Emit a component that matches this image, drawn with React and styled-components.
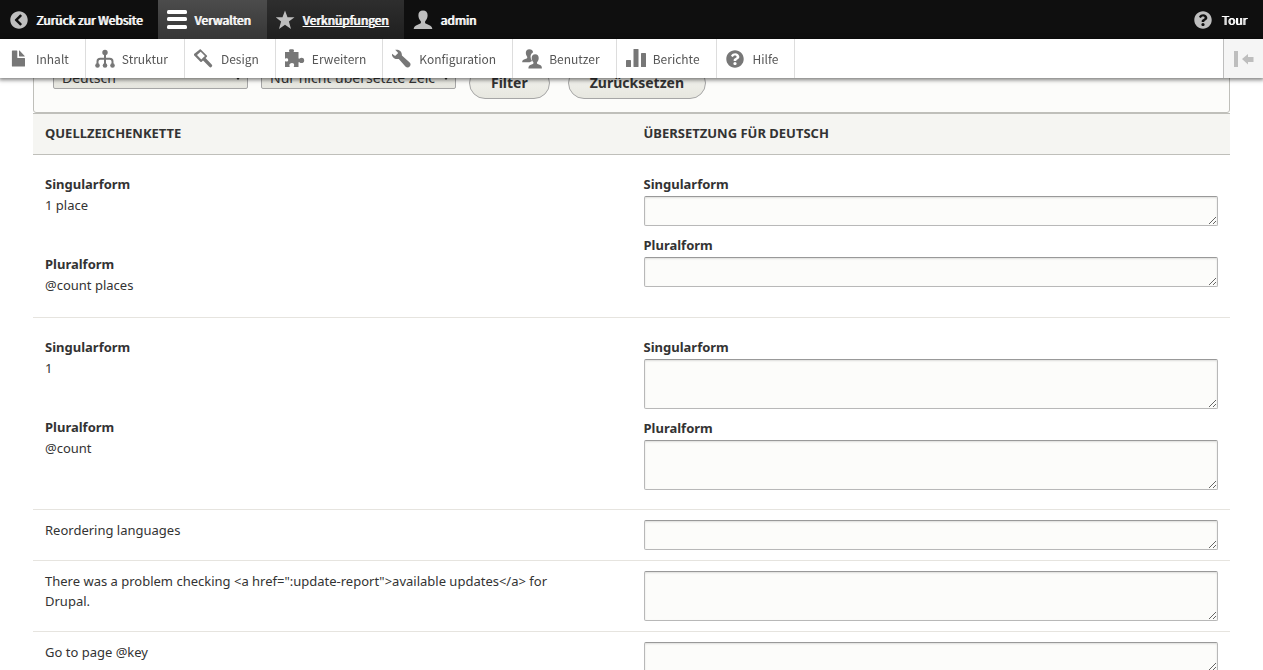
import React from "react";
import styled, { createGlobalStyle, css } from "styled-components";
import { FaChevronCircleLeft, FaQuestionCircle } from "react-icons/fa";

const GlobalStyle = createGlobalStyle`
  * {
    box-sizing: border-box;
  }
  body {
    margin: 0;
    background: #fff;
    color: #333;
    font-family: "Lucida Grande", "Lucida Sans Unicode", "Noto Sans", sans-serif;
    font-size: 13px;
    line-height: 20px;
  }
`;

// toolbar
const Toolbar = styled.header`
  position: fixed;
  top: 0;
  left: 0;
  right: 0;
  z-index: 10;
  font-family: "Source Sans Pro", "Noto Sans CJK SC", sans-serif;
  font-size: 12px;
`;

const Bar = styled.nav`
  display: flex;
  height: 39px;
  background: #0f0f0f;
`;

const Tray = styled.nav`
  display: flex;
  height: 39px;
  background: #fff;
  box-shadow: 0 1px 4px 1px rgba(0, 0, 0, 0.5);
`;

const itemLayout = css`
  display: flex;
  align-items: center;
  gap: 7px;
  padding: 0 16px 0 9px;
  text-decoration: none;

  svg {
    flex: none;
    width: 20px;
    height: 20px;
  }
`;

const tabBackgrounds = {
  plain: "none",
  open: "linear-gradient(#4c4c4c, #363636)",
  hover: "linear-gradient(#2e2e2e, #1f1f1f)",
};

const Tab = styled.a`
  ${itemLayout}
  margin-left: ${({ $end }) => ($end ? "auto" : "0")};
  background: ${({ $state = "plain" }) => tabBackgrounds[$state]};
  color: #fff;
  text-shadow: 1px 0 0 #fff;
  text-decoration: ${({ $state }) => ($state === "hover" ? "underline" : "none")};

  svg {
    color: ${({ $state }) => ($state === "open" ? "#fff" : "#bebebe")};
  }
`;

const TrayLink = styled.a`
  ${itemLayout}
  border-right: 1px solid #ddd;
  color: #565656;

  svg {
    color: #777;
  }
`;

const ToggleButton = styled.button`
  display: flex;
  align-items: center;
  justify-content: center;
  width: 40px;
  margin-left: auto;
  padding: 0;
  border: 0;
  border-left: 1px solid #bebebe;
  background: #f5f5f5;
  color: #bebebe;
`;

// filter form
const Page = styled.main`
  padding: 45px 33px 0;
`;

const FilterForm = styled.form`
  display: flex;
  align-items: flex-end;
  padding: 19px 19px 13px;
  border: 1px solid #bfbfba;
  border-radius: 0 0 3px 3px;
  background: #fcfcfa;
`;

const SelectBox = styled.div`
  position: relative;
  width: 195px;
  margin: 0 13px 10px 0;

  &::after {
    content: "";
    position: absolute;
    top: 11px;
    right: 7px;
    border: 3px solid transparent;
    border-top: 4px solid #222;
    pointer-events: none;
  }
`;

const Select = styled.select`
  appearance: none;
  display: block;
  width: 100%;
  height: 24px;
  padding: 0 20px 0 8px;
  border: 1px solid #a6a6a6;
  border-radius: 2px;
  background: linear-gradient(#f3f3ee, #e6e6df);
  color: #333;
  font: 14px "Noto Sans", sans-serif;
`;

const FormButton = styled.button`
  height: 32px;
  margin-right: 18px;
  padding: 0 21px 2px;
  border: 1px solid #a6a6a6;
  border-radius: 16px;
  background: linear-gradient(#f6f6f3, #e7e7df);
  color: #333;
  font: bold 14px "Noto Sans", sans-serif;
`;

// translation table
const Table = styled.table`
  width: 100%;
  border-collapse: separate;
  border-spacing: 0;
  table-layout: fixed;
`;

const HeadCell = styled.th`
  padding: 9px 12px 11px;
  border-top: 1px solid #bfbfba;
  border-bottom: 1px solid #bfbfba;
  background: #f5f5f2;
  text-align: left;
  text-transform: uppercase;
`;

const Cell = styled.td`
  padding: 10px 12px;
  border-bottom: 1px solid #e6e4df;
  vertical-align: top;
`;

const SourceCell = styled(Cell)`
  padding-right: 48px;
`;

const SourceForms = styled.div`
  display: flex;
  flex-direction: column;
  gap: 38px;
  padding: 9px 0 11px;
`;

const TargetForms = styled.div`
  display: flex;
  flex-direction: column;
  gap: 9px;
  padding: 9px 0;
`;

const Label = styled.label`
  display: block;
  font-weight: bold;
`;

const SourceText = styled.div`
  line-height: 22px;
`;

const Textarea = styled.textarea`
  display: block;
  width: 100%;
  height: ${({ $tall }) => ($tall ? 50 : 30)}px;
  margin-top: ${({ $labelled }) => ($labelled ? 2 : 0)}px;
  padding: 4px 8px;
  border: 1px solid #b8b8b8;
  border-top-color: #999;
  border-radius: 2px;
  background: #fcfcfa;
  box-shadow: inset 0 1px 2px rgba(0, 0, 0, 0.125);
  color: #333;
  font: inherit;
  resize: vertical;
`;

const Icon = ({ children, viewBox = "0 0 20 20" }) => (
  <svg viewBox={viewBox} fill="currentColor" aria-hidden="true">
    {children}
  </svg>
);

const BackIcon = () => (
  <Icon>
    <FaChevronCircleLeft x="1" y="1" size={18} style={{ width: 18, height: 18 }} />
  </Icon>
);

const HelpIcon = () => (
  <Icon>
    <FaQuestionCircle x="0" y="1" size={18} style={{ width: 18, height: 18 }} />
  </Icon>
);

const MenuIcon = () => (
  <Icon>
    <rect x="0" y="0" width="20" height="4" rx="1.5" />
    <rect x="0" y="7" width="20" height="4" rx="1.5" />
    <rect x="0" y="15" width="20" height="4" rx="1.5" />
  </Icon>
);

const StarIcon = () => (
  <Icon>
    <path d="M9 .5l2.500 6.700h7l-5.600 4.400 2.100 7.400-6-4.300L3 19l2.100-7.400L-.5 7.200h7z" />
  </Icon>
);

const PersonIcon = () => (
  <Icon>
    <path d="M10 .5c3 0 4.600 2 4.600 4.800 0 2.300-.9 4.300-2.200 5.600-.6.600-.4 2.300.3 2.700l4.300 1.900c1.500.7 2.200 2 2.300 3.500H.7c.1-1.500.8-2.800 2.300-3.500l4.300-1.900c.7-.4.9-2.100.3-2.700-1.300-1.300-2.200-3.300-2.200-5.600C5.400 2.500 7 .5 10 .5z" />
  </Icon>
);

const FileIcon = () => (
  <Icon>
    <path d="M3.500 1.500h4.300c.3 0 .5.200.5.500v6.400c0 .3.200.6.600.6h6.600c.3 0 .5.200.5.500v7.400c0 .4-.2.600-.6.600H3.500c-.4 0-.6-.2-.6-.6V2.100c0-.4.200-.6.600-.6z" />
    <path d="M10 1.800c0-.3.300-.4.500-.2l5.200 5.300c.2.200.1.500-.2.500h-5c-.3 0-.5-.2-.5-.5z" />
  </Icon>
);

const StructureIcon = () => (
  <Icon>
    <circle cx="10" cy="3.500" r="2.700" />
    <path
      d="M10 4v12M2.500 16v-3.500c0-2 .8-2.700 2.800-2.700h9.400c2 0 2.800.7 2.800 2.700V16"
      fill="none"
      stroke="currentColor"
      strokeWidth="2"
    />
    <circle cx="2.500" cy="16.500" r="2.300" />
    <circle cx="10" cy="16.500" r="2.300" />
    <circle cx="17.500" cy="16.500" r="2.300" />
  </Icon>
);

const BrushIcon = () => (
  <Icon viewBox="1 0 20 20">
    <path
      fillRule="evenodd"
      d="M.3 5.600L6.700.5c.4-.3.700-.3 1.100 0l6 6c.4.400.4.800.1 1.200l-5.200 5.100c-.5.400-.9.400-1.300 0zM4 6.100l4.300 4.500 3.600-3.600-4.200-4.200z"
    />
    <path
      d="M11.300 10.200l6.200 6.400"
      stroke="currentColor"
      strokeWidth="3.400"
      strokeLinecap="round"
    />
  </Icon>
);

const PuzzleIcon = () => (
  <Icon viewBox="1 0 20 20">
    <path d="M.2 3h4.600c.6 0 .7-.4.400-.9-.6-1-.2-1.900 2.300-1.900s2.900.9 2.300 1.900c-.3.500-.2.900.4.900h4.300v6c0 .7.500.9 1.100.5 1.400-1.100 4.600-1 4.600 1.900s-3.200 3.100-4.600 2c-.6-.5-1.100-.3-1.100.4V18h-4.200c-.6 0-.7-.5-.4-1 .6-1.200.2-2.900-1.900-2.900S5 15.800 5.600 17c.3.500.2 1-.4 1H.8v-5.200c0-.6.500-.7 1-.4 1.200.5 2.400 0 2.400-1.400S3 9 1.600 9.600c-.5.300-1.400.1-1.400-.5z" />
  </Icon>
);

const WrenchIcon = () => (
  <Icon viewBox="1 0 20 20">
    <path d="M4.200.8c3.200-.7 7 1.200 6.700 5.800l7.500 6.700c1.500 1.300 1.500 3 .3 4.300-1.200 1.200-3 1.200-4.300-.2L7.800 10c-3.800.6-6.800-1.300-7.200-5.400l3.500 2.300L7.200 4z" />
  </Icon>
);

const PeopleIcon = () => (
  <Icon>
    <path d="M7.300.3c2.300 0 3.500 1.100 3.800 3C8.700 4.500 8.100 7 8.900 9.700c.3.900.8 1.600 1.200 2.200l-2.500 1.400H.2c0-1.500.5-2.300 1.800-2.800l2.600-1c.8-.3.900-1.400.4-2C4.200 6.500 3.800 5.300 3.800 4 3.800 1.800 5.100.3 7.300.3z" />
    <path d="M13.200 5.200c2.300 0 3.500 1.600 3.500 3.800 0 1.600-.6 3.100-1.500 4-.5.500-.3 1.700.4 2l2.500 1.100c1.300.6 1.800 1.800 1.800 3.500H6.400c0-1.700.6-2.900 1.900-3.500l2.500-1.100c.7-.3.900-1.500.4-2-.9-.9-1.500-2.400-1.500-4 0-2.200 1.200-3.800 3.500-3.800z" />
  </Icon>
);

const ChartIcon = () => (
  <Icon>
    <rect x="0" y="11" width="5" height="7" rx=".6" />
    <rect x="7.500" y="0" width="5" height="18" rx=".6" />
    <rect x="15" y="4" width="5" height="14" rx=".6" />
  </Icon>
);

const ToggleIcon = () => (
  <svg width="20" height="16" viewBox="0 0 20 16" fill="currentColor" aria-hidden="true">
    <rect x="0" y="0" width="4" height="16" />
    <path d="M8 8l6-5v3h5.500v5H14v2.500z" />
  </svg>
);

const trayItems = [
  { title: "Inhalt", icon: FileIcon },
  { title: "Struktur", icon: StructureIcon },
  { title: "Design", icon: BrushIcon },
  { title: "Erweitern", icon: PuzzleIcon },
  { title: "Konfiguration", icon: WrenchIcon },
  { title: "Benutzer", icon: PeopleIcon },
  { title: "Berichte", icon: ChartIcon },
  { title: "Hilfe", icon: HelpIcon },
];

const strings = [
  { id: "s1", singular: "1 place", plural: "@count places" },
  { id: "s2", singular: "1", plural: "@count", tall: true },
  { id: "s3", source: "Reordering languages" },
  {
    id: "s4",
    source:
      'There was a problem checking <a href=":update-report">available updates</a> for Drupal.',
    tall: true,
  },
  { id: "s5", source: "Go to page @key" },
];

const PluralRow = ({ item }) => (
  <tr>
    <SourceCell>
      <SourceForms>
        <div>
          <Label as="strong">Singularform</Label>
          <SourceText>{item.singular}</SourceText>
        </div>
        <div>
          <Label as="strong">Pluralform</Label>
          <SourceText>{item.plural}</SourceText>
        </div>
      </SourceForms>
    </SourceCell>
    <Cell>
      <TargetForms>
        <div>
          <Label htmlFor={`${item.id}-0`}>Singularform</Label>
          <Textarea id={`${item.id}-0`} $tall={item.tall} $labelled />
        </div>
        <div>
          <Label htmlFor={`${item.id}-1`}>Pluralform</Label>
          <Textarea id={`${item.id}-1`} $tall={item.tall} $labelled />
        </div>
      </TargetForms>
    </Cell>
  </tr>
);

const SingleRow = ({ item }) => (
  <tr>
    <SourceCell>
      <label htmlFor={item.id}>{item.source}</label>
    </SourceCell>
    <Cell>
      <Textarea id={item.id} $tall={item.tall} />
    </Cell>
  </tr>
);

const App = () => {
  return (
    <>
      <GlobalStyle />
      <Toolbar>
        <Bar>
          <Tab href="#home">
            <BackIcon />
            Zurück zur Website
          </Tab>
          <Tab href="#manage" $state="open">
            <MenuIcon />
            Verwalten
          </Tab>
          <Tab href="#shortcuts" $state="hover">
            <StarIcon />
            Verknüpfungen
          </Tab>
          <Tab href="#user">
            <PersonIcon />
            admin
          </Tab>
          <Tab href="#tour" $end>
            <HelpIcon />
            Tour
          </Tab>
        </Bar>
        <Tray>
          {trayItems.map(({ title, icon: ItemIcon }) => (
            <TrayLink key={title} href={`#${title.toLowerCase()}`}>
              <ItemIcon />
              {title}
            </TrayLink>
          ))}
          <ToggleButton type="button" aria-label="Vertikale Ausrichtung">
            <ToggleIcon />
          </ToggleButton>
        </Tray>
      </Toolbar>

      <Page>
        <FilterForm onSubmit={(e) => e.preventDefault()}>
          <SelectBox>
            <Select aria-label="Sprache">
              <option>Deutsch</option>
            </Select>
          </SelectBox>
          <SelectBox>
            <Select aria-label="Suchen in">
              <option>Nur nicht übersetzte Zeichenketten</option>
            </Select>
          </SelectBox>
          <FormButton type="submit">Filter</FormButton>
          <FormButton type="reset">Zurücksetzen</FormButton>
        </FilterForm>

        <Table>
          <thead>
            <tr>
              <HeadCell>Quellzeichenkette</HeadCell>
              <HeadCell>Übersetzung für Deutsch</HeadCell>
            </tr>
          </thead>
          <tbody>
            {strings.map((item) =>
              item.source ? (
                <SingleRow key={item.id} item={item} />
              ) : (
                <PluralRow key={item.id} item={item} />
              )
            )}
          </tbody>
        </Table>
      </Page>
    </>
  );
};

export default App;
